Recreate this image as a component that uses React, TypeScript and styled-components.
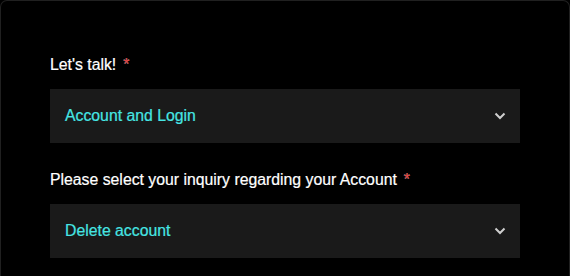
import React from "react";
import styled, { createGlobalStyle } from "styled-components";

const Global = createGlobalStyle`
  html, body { margin: 0; padding: 0; background: #000; }
  body { font-family: "Liberation Sans", Arial, sans-serif; }
  * { box-sizing: border-box; }
`;

const Panel = styled.div`
  width: 570px;
  height: 276px;
  background: #000;
  border: 1px solid #202020;
  border-bottom: none;
  border-radius: 7px 7px 0 0;
  padding: 54px 49px 0 49px;
  display: flex;
  flex-direction: column;
  gap: 27px;
`;

const Field = styled.div`
  display: flex;
  flex-direction: column;
  gap: 14px;
`;

const Label = styled.div`
  color: #fff;
  font-size: 15.8px;
  line-height: 20px;
  height: 20px;
  white-space: nowrap;
  -webkit-text-stroke: 0.2px #fff;
`;

const Required = styled.span`
  color: #e00000;
  margin-left: 7px;
`;

const Select = styled.div`
  height: 54px;
  background: #1a1a1a;
  display: flex;
  align-items: center;
  justify-content: space-between;
  padding: 0 14px 0 15px;
`;

const Value = styled.span`
  color: #46e6e4;
  font-size: 15.8px;
  -webkit-text-stroke: 0.2px #46e6e4;
`;

const Chevron = () => (
  <svg width="12" height="8" viewBox="0 0 12 8" style={{ display: "block" }}>
    <path d="M1.5 1.5 L6 6 L10.5 1.5" fill="none" stroke="#cfcfcf" strokeWidth="2" />
  </svg>
);

const SelectField = ({ label, value }: { label: string; value: string }) => (
  <Field>
    <Label>
      {label}
      <Required>*</Required>
    </Label>
    <Select>
      <Value>{value}</Value>
      <Chevron />
    </Select>
  </Field>
);

export default function App() {
  return (
    <>
      <Global />
      <Panel>
        <SelectField label="Let's talk!" value="Account and Login" />
        <SelectField label="Please select your inquiry regarding your Account" value="Delete account" />
      </Panel>
    </>
  );
}
